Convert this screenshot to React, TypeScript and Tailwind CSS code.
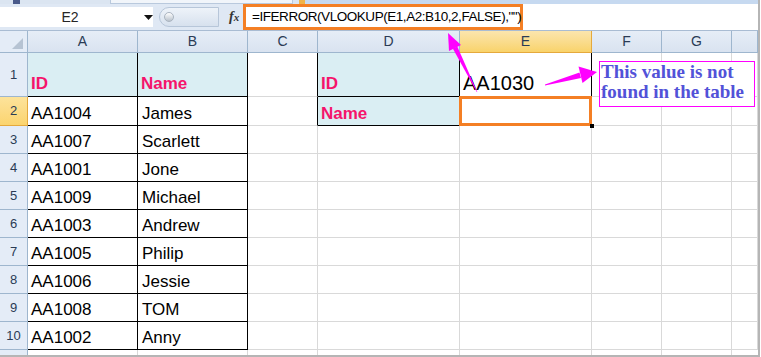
import React from "react";

const data: [string, string][] = [
  ["AA1004", "James"],
  ["AA1007", "Scarlett"],
  ["AA1001", "Jone"],
  ["AA1009", "Michael"],
  ["AA1003", "Andrew"],
  ["AA1005", "Philip"],
  ["AA1006", "Jessie"],
  ["AA1008", "TOM"],
  ["AA1002", "Anny"],
];

const hdr =
  "flex items-center justify-center border-r border-b border-[#9eb6ce] bg-gradient-to-b from-[#e6edf7] to-[#d9e3f0] text-[14px] text-[#2a3b55]";
const hdrSel =
  "flex items-center justify-center border-r border-b border-[#e5a93c] bg-gradient-to-b from-[#fbe5ad] to-[#f9d36a] text-[14px] text-[#2a3b55]";
const rowHdr =
  "flex items-center justify-center border-r border-b border-[#9eb6ce] bg-[#e4ecf7] text-[13px] text-[#2a3b55]";
const rowHdrSel =
  "flex items-center justify-center border-r border-b border-[#e5a93c] bg-gradient-to-b from-[#fde39b] to-[#fbd46e] text-[13px] text-[#2a3b55]";
const grid = "border-r border-b border-[#d9d9d9]";

export default function App() {
  return (
    <div className="relative w-[761px] h-[357px] bg-white overflow-hidden font-['Liberation_Sans',Arial,sans-serif]">
      <div className="w-[760px] h-[357px] flex flex-col border-r-2 border-b-2 border-[#b5b5b5]">
        {/* top strip */}
        <div className="h-[4px] flex bg-[#dbe5f1]">
          <div className="w-[13px]" />
          <div className="w-[7px] bg-[#4a5a8a]" />
          <div className="w-[90px]" />
          <div className="w-[183px] bg-[#f1f5fa] border-x border-b border-[#b9c9dd]" />
          <div className="w-[6px]" />
          <div className="w-[6px] bg-[#f0b44a]" />
          <div className="flex-1 bg-[#c6d9f0]" />
        </div>
        {/* formula bar */}
        <div className="h-[26px] flex bg-[#dfe8f4]">
          <div className="w-[153px] my-[3px] bg-white flex items-center">
            <div className="w-[140px] text-center text-[14px] text-[#262626]">E2</div>
            <svg width="9" height="5" viewBox="0 0 9 5" className="ml-[4px]">
              <polygon points="0,0 9,0 4.5,5" fill="#111" />
            </svg>
          </div>
          <div className="w-[90px] flex items-center">
            <div className="ml-[6px] h-[20px] w-[60px] rounded-l-full border border-[#b7c6d9] bg-gradient-to-b from-[#eef3f9] to-[#d7e1ee] flex items-center">
              <div className="ml-[4px] w-[10px] h-[10px] rounded-full bg-gradient-to-b from-[#ffffff] to-[#b9c2cc] border border-[#aab4c0]" />
            </div>
            <div className="ml-[10px] font-['Liberation_Serif',serif] italic font-bold text-[14px] text-[#333] leading-none">
              f<span className="text-[11px]">x</span>
            </div>
          </div>
          <div className="flex-1 bg-white flex">
            <div className="w-[280px] h-[26px] border-[3px] border-[#f47f24] flex items-center pl-[6px] text-[13.5px] tracking-[-0.45px] text-black whitespace-nowrap">
              =IFERROR(VLOOKUP(E1,A2:B10,2,FALSE),"")
            </div>
          </div>
        </div>
        <div className="h-[1px] bg-[#a9bcd3]" />
        {/* sheet */}
        <div className="grid grid-cols-[28px_110px_110px_70px_142px_132px_70px_70px_26px] grid-rows-[22px_44px_29px_repeat(8,28px)_5px] text-[17px] text-black">
          {/* header row */}
          <div className="relative border-r border-b border-[#9eb6ce] bg-[#e4ecf7]">
            <svg width="11" height="11" viewBox="0 0 11 11" className="absolute right-[4px] bottom-[3px]">
              <polygon points="11,0 11,11 0,11" fill="#b6c3d3" />
            </svg>
          </div>
          <div className={hdr}>A</div>
          <div className={hdr}>B</div>
          <div className={hdr}>C</div>
          <div className={hdr}>D</div>
          <div className={hdrSel}>E</div>
          <div className={hdr}>F</div>
          <div className={hdr}>G</div>
          <div className={hdr}></div>

          {/* row 1 */}
          <div className={rowHdr}>1</div>
          <div className="flex items-end pl-[3px] pb-[4px] leading-none font-bold text-[#f5146b] bg-[#daeef3] border-r border-b border-black">ID</div>
          <div className="flex items-end pl-[3px] pb-[4px] leading-none font-bold text-[#f5146b] bg-[#daeef3] border-r border-b border-black">Name</div>
          <div className="border-r border-r-black border-b border-b-[#d9d9d9]" />
          <div className="flex items-end pl-[3px] pb-[4px] leading-none font-bold text-[#f5146b] bg-[#daeef3] border-r border-b border-black">ID</div>
          <div className="flex items-end pl-[3px] pb-[3px] leading-none text-[20px] border-r border-b border-black">AA1030</div>
          <div className={grid} />
          <div className={grid} />
          <div className={grid} />

          {/* row 2 */}
          <div className={rowHdrSel}>2</div>
          <div className="flex items-end pl-[3px] pb-[3px] leading-none border-r border-b border-black">{data[0][0]}</div>
          <div className="flex items-end pl-[4px] pb-[3px] leading-none border-r border-b border-black">{data[0][1]}</div>
          <div className="border-r border-r-black border-b border-b-[#d9d9d9]" />
          <div className="flex items-end pl-[3px] pb-[3px] leading-none font-bold text-[#f5146b] bg-[#daeef3] border-r border-b border-black">Name</div>
          <div className="relative border-r border-b border-black">
            <div className="absolute left-[-1px] top-[-1px] w-[133px] h-[30px] border-[3px] border-[#f47f24]" />
            <div className="absolute right-[-3px] bottom-[-3px] w-[4px] h-[4px] bg-black" />
          </div>
          <div className={grid} />
          <div className={grid} />
          <div className={grid} />

          {data.slice(1).map(([id, name], i) => (
            <React.Fragment key={id}>
              <div className={rowHdr}>{i + 3}</div>
              <div className="flex items-end pl-[3px] pb-[3px] leading-none border-r border-b border-black">{id}</div>
              <div className="flex items-end pl-[4px] pb-[3px] leading-none border-r border-b border-black">{name}</div>
              <div className={grid} />
              <div className={grid} />
              <div className={grid} />
              <div className={grid} />
              <div className={grid} />
              <div className={grid} />
            </React.Fragment>
          ))}

          {/* partial row 11 */}
          <div className="border-r border-[#9eb6ce] bg-[#e4ecf7]" />
          <div className="border-r border-[#d9d9d9]" />
          <div className="border-r border-[#d9d9d9]" />
          <div className="border-r border-[#d9d9d9]" />
          <div className="border-r border-[#d9d9d9]" />
          <div className="border-r border-[#d9d9d9]" />
          <div className="border-r border-[#d9d9d9]" />
          <div className="border-r border-[#d9d9d9]" />
          <div />
        </div>
      </div>

      {/* callout text box */}
      <div className="absolute left-[599px] top-[61px] w-[156px] h-[46px] border border-[#ff00ff] bg-white pl-[1px] font-['Liberation_Serif',serif] font-bold text-[19px] leading-[20px] text-[#5252d8]">
        <div>This value is not</div>
        <div>found in the table</div>
      </div>

      {/* arrows */}
      <svg className="absolute left-0 top-0 pointer-events-none" width="761" height="357" viewBox="0 0 761 357">
        <polygon points="477.4,92.2 476.6,91.8 452.8,48.6 457.3,46.4" fill="#ff00ff" />
        <polygon points="448,33 461,45 449,51" fill="#ff00ff" />
        <polygon points="545,85.5 545,84.5 579.5,72.5 581,78" fill="#ff00ff" />
        <polygon points="597,72 578.5,66.5 582.5,83" fill="#ff00ff" />
      </svg>
    </div>
  );
}
